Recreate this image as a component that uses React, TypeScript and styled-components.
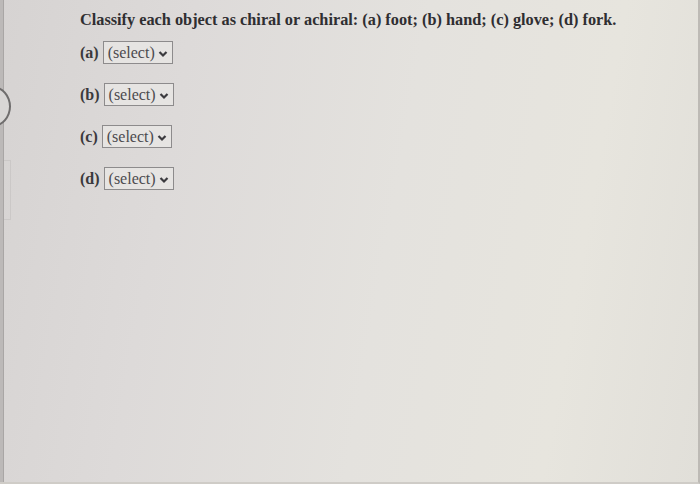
import styled, { createGlobalStyle } from "styled-components";

const GlobalStyle = createGlobalStyle`
  html, body {
    margin: 0;
    padding: 0;
  }
  body {
    width: 700px;
    height: 484px;
    overflow: hidden;
  }
`;

const rows = ["a", "b", "c", "d"];

const App = () => {
  return (
    <Screen>
      <GlobalStyle />
      <Edge>
        <RoundButton />
        <SideTab />
      </Edge>
      <Content>
        <Question>
          Classify each object as chiral or achiral: (a) foot; (b) hand; (c)
          glove; (d) fork.
        </Question>
        <Rows>
          {rows.map((r) => (
            <Row key={r}>
              <Label>({r})</Label>
              <SelectBox>
                <span>(select)</span>
                <Chevron viewBox="0 0 10 8">
                  <path d="M1.5 2 L5 5.5 L8.5 2" />
                </Chevron>
              </SelectBox>
            </Row>
          ))}
        </Rows>
      </Content>
    </Screen>
  );
};

export default App;

const Screen = styled.div`
  position: relative;
  width: 700px;
  height: 484px;
  box-sizing: border-box;
  display: flex;
  background: linear-gradient(
    100deg,
    #d6d3d2 0%,
    #dddad9 25%,
    #e4e2de 55%,
    #e7e5de 80%,
    #e1dfd9 100%
  );
  border-right: 2px solid #bdbab5;
  border-bottom: 2px solid #cfccc7;
  font-family: "Liberation Serif", "Times New Roman", serif;
`;

const Edge = styled.div`
  position: relative;
  width: 3px;
  flex: none;
  background: #bcb9b8;
  border-right: 1px solid #a9a6a5;
`;

const RoundButton = styled.div`
  position: absolute;
  left: -26px;
  top: 86px;
  width: 33px;
  height: 37px;
  border-radius: 50%;
  border: 2px solid #6f6d6d;
  background: #d8d6d5;
`;

const SideTab = styled.div`
  position: absolute;
  left: 4px;
  top: 160px;
  width: 6px;
  height: 58px;
  border: 1px solid #cbc8c7;
  border-left: none;
`;

const Content = styled.div`
  padding: 10px 0 0 76px;
`;

const Question = styled.div`
  font-size: 16.3px;
  font-weight: bold;
  color: #2f2e31;
`;

const Rows = styled.div`
  display: flex;
  flex-direction: column;
  gap: 19px;
  margin-top: 11px;
`;

const Row = styled.div`
  display: flex;
  align-items: center;
  gap: 4px;
  height: 23px;
`;

const Label = styled.span`
  font-size: 16px;
  font-weight: bold;
  color: #3a393c;
`;

const SelectBox = styled.div`
  display: flex;
  align-items: center;
  gap: 3px;
  height: 21px;
  padding: 0 4px 0 4px;
  border: 1px solid #8d8b8c;
  background: #e6e4e2;
  font-size: 16px;
  color: #4c4b4f;
`;

const Chevron = styled.svg`
  width: 10px;
  height: 8px;
  fill: none;
  stroke: #3c3b3f;
  stroke-width: 2.2;
  margin-top: 2px;
`;
